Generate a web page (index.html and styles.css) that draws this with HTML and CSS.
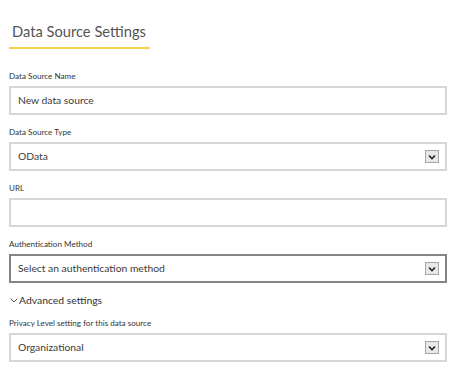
FILE: index.html
```html
<!DOCTYPE html>
<html lang="en">
<head>
    <meta charset="UTF-8">
    <title>Data Source Settings</title>
    <link rel="stylesheet" href="styles.css">
</head>
<body>
    <div class="panel">
        <div class="header">
            <h1>Data Source Settings</h1>
        </div>

        <div class="field">
            <label>Data Source Name</label>
            <div class="box">New data source</div>
        </div>
        <div class="field">
            <label>Data Source Type</label>
            <div class="box select">
                <span>OData</span>
                <span class="arrow"><svg width="8" height="6" viewBox="0 0 8 6"><path d="M1 1.5 L4 4.5 L7 1.5" fill="none" stroke="#222" stroke-width="1.6"/></svg></span>
            </div>
        </div>
        <div class="field">
            <label>URL</label>
            <div class="box"></div>
        </div>
        <div class="field">
            <label>Authentication Method</label>
            <div class="box select active">
                <span>Select an authentication method</span>
                <span class="arrow"><svg width="8" height="6" viewBox="0 0 8 6"><path d="M1 1.5 L4 4.5 L7 1.5" fill="none" stroke="#222" stroke-width="1.6"/></svg></span>
            </div>
        </div>

        <div class="advanced">
            <svg width="8" height="5" viewBox="0 0 8 5"><path d="M0.5 0.5 L4 4 L7.5 0.5" fill="none" stroke="#555" stroke-width="1"/></svg>Advanced settings
        </div>

        <div class="field">
            <label>Privacy Level setting for this data source</label>
            <div class="box select">
                <span>Organizational</span>
                <span class="arrow"><svg width="8" height="6" viewBox="0 0 8 6"><path d="M1 1.5 L4 4.5 L7 1.5" fill="none" stroke="#222" stroke-width="1.6"/></svg></span>
            </div>
        </div>
    </div>
</body>
</html>
```

FILE: styles.css
```css
body {
    margin: 0;
    background-color: #fff;
    font-family: Lato, 'Open Sans', sans-serif;
    color: #333;
}
.panel {
    width: 438px;
    padding: 20px 0 0 9px;
}
.header {
    margin-bottom: 20px;
}
.header h1 {
    display: inline-block;
    margin: 0;
    padding: 0 4px 5px 3px;
    font-size: 14.7px;
    font-weight: normal;
    line-height: 22px;
    color: #555;
    border-bottom: 2px solid #f2d34a;
}
.field {
    margin-bottom: 10px;
}
.field label {
    display: block;
    font-size: 8.1px;
    line-height: 14px;
    margin-bottom: 3px;
    color: #333;
}
.box {
    box-sizing: border-box;
    height: 29px;
    border: 2px solid #d6d6d6;
    padding: 0 6px 0 7px;
    font-size: 10.3px;
    line-height: 25px;
    color: #3a3a3a;
    display: flex;
    align-items: center;
    justify-content: space-between;
}
.box.active {
    border-color: #858585;
}
.arrow {
    box-sizing: border-box;
    width: 14px;
    height: 13px;
    background-color: #e8e8e8;
    border: 1px solid #a8a8a8;
    display: flex;
    align-items: center;
    justify-content: center;
}
.advanced {
    font-size: 10.4px;
    line-height: 18px;
    color: #333;
    margin: -2px 0 7px 0;
    display: flex;
    align-items: center;
}
.advanced svg {
    margin: 0 1px 0 1px;
}
```
